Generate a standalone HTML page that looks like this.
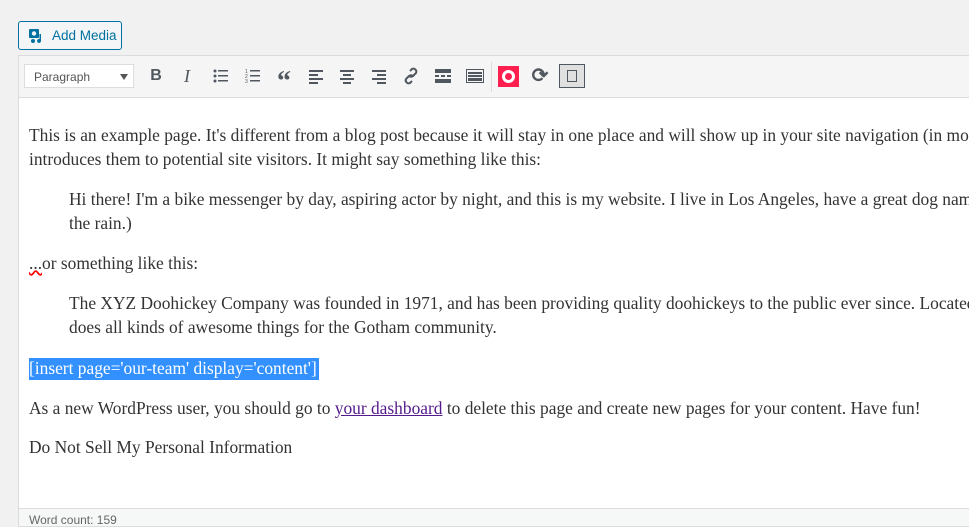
<!DOCTYPE html>
<html><head><meta charset="utf-8"><style>
body{margin:0;width:969px;height:518px;background:#f1f1f1;position:relative;overflow:hidden;font-family:"Liberation Sans",sans-serif}
.btn{position:absolute;left:18px;top:21px;width:104px;height:29px;border:1px solid #0071a1;border-radius:3px;background:#f3f5f6;color:#0071a1;font-size:13.5px;box-sizing:border-box}
.btn span{position:absolute;left:33px;top:6px}
.wrap{position:absolute;left:18px;top:55px;width:951px;height:470px;border:1px solid #dcdcde;border-right:0;background:#fff;overflow:hidden}
.tb{position:absolute;left:0;top:0;right:0;height:41px;background:#f5f5f5;border-bottom:1px solid #dcdcde}
.sel{position:absolute;left:5px;top:8px;width:110px;height:24px;background:#fff;border:1px solid #ddd;box-sizing:border-box;font-size:12px;color:#555}
.sel span{position:absolute;left:9px;top:5px}
.sel i{position:absolute;right:5px;top:9px;border:4px solid transparent;border-top:6px solid #555;border-bottom:0}
.ic{position:absolute;top:10px;width:20px;height:20px;color:#50575e;font-size:16px;text-align:center;line-height:20px}
.t{position:absolute;white-space:nowrap;font-family:"Liberation Serif",serif;font-size:17.4px;color:#333;line-height:20px}
.status{position:absolute;left:0;right:0;bottom:0;top:452px;background:#f6f7f7;border-top:1px solid #dcdcde}
</style></head><body>
<div class="btn"><svg style="position:absolute;left:9px;top:6px" width="18" height="16" viewBox="0 0 18 16"><rect x="1" y="1" width="10" height="9" rx="1" fill="#0071a1"/><circle cx="6" cy="5.5" r="2.2" fill="#f3f5f6"/><path d="M13 6v7a2 2 0 1 1-1.5-2V6z" fill="#0071a1"/><circle cx="5" cy="13" r="2" fill="#0071a1"/></svg><span>Add Media</span></div>
<div class="wrap">
<div class="tb">
<div class="sel"><span>Paragraph</span><i></i></div>
<div class="ic" style="left:127px;font-weight:bold">B</div>
<div class="ic" style="left:158px;font-style:italic;font-family:'Liberation Serif',serif;font-size:18px">I</div>
<svg class="ic" style="left:192px" viewBox="0 0 20 20"><g fill="#50575e"><circle cx="4" cy="5" r="1.5"/><circle cx="4" cy="10" r="1.5"/><circle cx="4" cy="15" r="1.5"/><rect x="7" y="4" width="10" height="1.5"/><rect x="7" y="9" width="10" height="1.5"/><rect x="7" y="14" width="10" height="1.5"/></g></svg>
<svg class="ic" style="left:224px" viewBox="0 0 20 20"><g fill="#50575e"><text x="2" y="7" font-size="5" font-family="Liberation Sans">1</text><text x="2" y="12" font-size="5" font-family="Liberation Sans">2</text><text x="2" y="17" font-size="5" font-family="Liberation Sans">3</text><rect x="7" y="4" width="10" height="1.5"/><rect x="7" y="9" width="10" height="1.5"/><rect x="7" y="14" width="10" height="1.5"/></g></svg>
<div class="ic" style="left:255px;font-family:'Liberation Serif',serif;font-weight:bold;font-size:28px;line-height:32px">“</div>
<svg class="ic" style="left:287px" viewBox="0 0 20 20"><g fill="#50575e"><rect x="3" y="4" width="14" height="2"/><rect x="3" y="8" width="9" height="2"/><rect x="3" y="12" width="14" height="2"/><rect x="3" y="16" width="9" height="2"/></g></svg>
<svg class="ic" style="left:318px" viewBox="0 0 20 20"><g fill="#50575e"><rect x="3" y="4" width="14" height="2"/><rect x="6" y="8" width="8" height="2"/><rect x="3" y="12" width="14" height="2"/><rect x="6" y="16" width="8" height="2"/></g></svg>
<svg class="ic" style="left:350px" viewBox="0 0 20 20"><g fill="#50575e"><rect x="3" y="4" width="14" height="2"/><rect x="8" y="8" width="9" height="2"/><rect x="3" y="12" width="14" height="2"/><rect x="8" y="16" width="9" height="2"/></g></svg>
<svg class="ic" style="left:382px" viewBox="0 0 20 20"><g fill="none" stroke="#50575e" stroke-width="2"><path d="M9 5l2-2a3 3 0 0 1 4 4l-3 3a3 3 0 0 1-4 0"/><path d="M11 15l-2 2a3 3 0 0 1-4-4l3-3a3 3 0 0 1 4 0"/></g></svg>
<svg class="ic" style="left:414px" viewBox="0 0 20 20"><g fill="#50575e"><rect x="2" y="3" width="16" height="4"/><rect x="2" y="9" width="4" height="2"/><rect x="8" y="9" width="4" height="2"/><rect x="14" y="9" width="4" height="2"/><rect x="2" y="13" width="16" height="4"/></g></svg>
<svg class="ic" style="left:446px" viewBox="0 0 20 20"><rect x="1.5" y="3.5" width="17" height="13" fill="none" stroke="#50575e"/><g fill="#50575e"><rect x="3" y="6" width="14" height="2"/><rect x="3" y="9" width="14" height="2"/><rect x="3" y="12" width="14" height="3"/></g></svg>
<div style="position:absolute;left:472px;top:6px;width:1px;height:30px;background:#ddd"></div>
<div style="position:absolute;left:479px;top:10px;width:21px;height:21px;background:#ff1f4e"><div style="position:absolute;left:4px;top:4px;width:7px;height:7px;border:3px solid #fff;border-radius:50%"></div></div>
<div class="ic" style="left:511px;font-size:20px;font-weight:bold">⟳</div>
<div style="position:absolute;left:540px;top:8px;width:26px;height:24px;border:1px solid #50575e;background:#e0e0e0;box-sizing:border-box"><div style="position:absolute;left:7px;top:5px;width:8px;height:10px;border:1px solid #50575e"></div></div>
</div>
<div class="t" style="left:10px;top:69px">This is an example page. It's different from a blog post because it will stay in one place and will show up in your site navigation (in most themes). Most people start with an About page that</div>
<div class="t" style="left:10px;top:93px">introduces them to potential site visitors. It might say something like this:</div>
<div class="t" style="left:50px;top:133px">Hi there! I'm a bike messenger by day, aspiring actor by night, and this is my website. I live in Los Angeles, have a great dog named Jack, and I like piña coladas. (And gettin' caught in</div>
<div class="t" style="left:50px;top:157px">the rain.)</div>
<div class="t" style="left:10px;top:197px"><span style="text-decoration:underline wavy red">...</span>or something like this:</div>
<div class="t" style="left:50px;top:237px">The XYZ Doohickey Company was founded in 1971, and has been providing quality doohickeys to the public ever since. Located in Gotham City, XYZ employs over 2,000 people and</div>
<div class="t" style="left:50px;top:261px">does all kinds of awesome things for the Gotham community.</div>
<div class="t" style="left:10px;top:302px;background:#3390ff;color:#fff;padding:0 2px 2px 0">[insert page='our-team' display='content']</div>
<div class="t" style="left:10px;top:342px">As a new WordPress user, you should go to <span style="color:#551a8b;text-decoration:underline">your dashboard</span> to delete this page and create new pages for your content. Have fun!</div>
<div class="t" style="left:10px;top:381px">Do Not Sell My Personal Information</div>
<div class="status"><span style="position:absolute;left:10px;top:4px;font-size:12px;color:#666">Word count: 159</span></div>
</div>
</body></html>
